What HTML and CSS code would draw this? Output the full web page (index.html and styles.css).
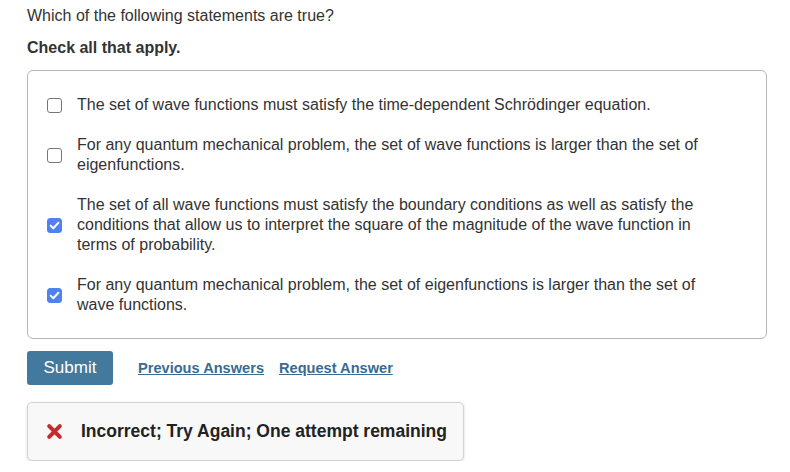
FILE: index.html
```html
<!DOCTYPE html>
<html lang="en">
<head>
    <meta charset="UTF-8">
    <title>Check all that apply</title>
    <link rel="stylesheet" href="styles.css">
</head>
<body>
    <div class="question">
        <p class="prompt">Which of the following statements are true?</p>
        <p class="instruction">Check all that apply.</p>

        <div class="choices">
            <label class="choice">
                <span class="box"></span>
                <span class="text">The set of wave functions must satisfy the time-dependent Schrödinger equation.</span>
            </label>
            <label class="choice">
                <span class="box"></span>
                <span class="text">For any quantum mechanical problem, the set of wave functions is larger than the set of eigenfunctions.</span>
            </label>
            <label class="choice">
                <span class="box checked">
                    <svg viewBox="0 0 15 15" width="15" height="15"><path d="M3.6 7.6 L6.3 10.2 L11.4 4.8" fill="none" stroke="#fff" stroke-width="2" stroke-linecap="round" stroke-linejoin="round"/></svg>
                </span>
                <span class="text">The set of all wave functions must satisfy the boundary conditions as well as satisfy the conditions that allow us to interpret the square of the magnitude of the wave function in terms of probability.</span>
            </label>
            <label class="choice">
                <span class="box checked">
                    <svg viewBox="0 0 15 15" width="15" height="15"><path d="M3.6 7.6 L6.3 10.2 L11.4 4.8" fill="none" stroke="#fff" stroke-width="2" stroke-linecap="round" stroke-linejoin="round"/></svg>
                </span>
                <span class="text">For any quantum mechanical problem, the set of eigenfunctions is larger than the set of wave functions.</span>
            </label>
        </div>

        <div class="actions">
            <button class="submit">Submit</button>
            <a href="#" class="link">Previous Answers</a>
            <a href="#" class="link">Request Answer</a>
        </div>

        <div class="feedback">
            <svg class="cross" viewBox="0 0 16 16" width="17" height="17"><path d="M3 3 L13 13 M13 3 L3 13" stroke="#c9282d" stroke-width="3.8" stroke-linecap="round"/></svg>
            <span>Incorrect; Try Again; One attempt remaining</span>
        </div>
    </div>
</body>
</html>
```

FILE: styles.css
```css
body {
    margin: 0;
    padding: 0;
    background-color: #fff;
    font-family: "Liberation Sans", Arial, sans-serif;
    color: #333;
}
.question {
    width: 740px;
    padding: 6px 0 0 27px;
}
.prompt {
    margin: 0;
    font-size: 16px;
    line-height: 20px;
}
.instruction {
    margin: 12px 0 0;
    font-size: 16px;
    line-height: 20px;
    font-weight: bold;
}
.choices {
    margin-top: 12px;
    border: 1px solid #b5b5b5;
    border-radius: 6px;
    padding: 24px 46px 23px 19px;
    display: flex;
    flex-direction: column;
    gap: 20px;
}
.choice {
    display: flex;
    align-items: center;
    gap: 15px;
    font-size: 16px;
    line-height: 20px;
}
.box {
    flex: none;
    width: 13px;
    height: 13px;
    border: 1px solid #767676;
    border-radius: 3px;
    background: #fff;
    display: flex;
}
.box.checked {
    background: #4d82f0;
    border-color: #4d82f0;
}
.box svg {
    margin: -1px;
}
.text {
    color: #333;
}
.actions {
    margin-top: 12px;
    display: flex;
    align-items: center;
    gap: 15px;
}
.submit {
    background-color: #43799c;
    color: #fff;
    border: none;
    border-radius: 3px;
    height: 34px;
    width: 86px;
    font-family: inherit;
    font-size: 17px;
    margin-right: 10px;
    cursor: pointer;
}
.link {
    color: #3a6b90;
    font-weight: bold;
    font-size: 14.6px;
    text-decoration: underline;
}
.feedback {
    margin-top: 17px;
    width: 437px;
    height: 59px;
    box-sizing: border-box;
    border: 1px solid #d2d2d2;
    border-radius: 5px;
    background-color: #f8f8f8;
    box-shadow: 0 1px 3px rgba(0,0,0,0.15);
    display: flex;
    align-items: center;
    gap: 18px;
    padding-left: 18px;
    font-weight: bold;
    font-size: 17.5px;
    color: #222;
}
.cross {
    flex: none;
}
```
